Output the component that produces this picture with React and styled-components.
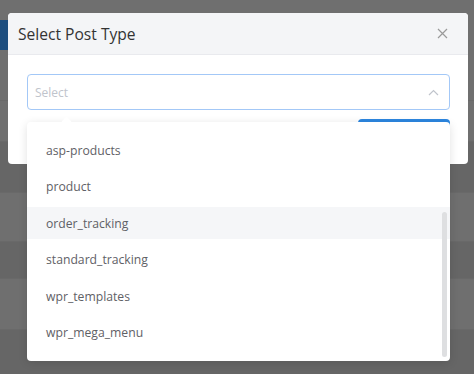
import React from "react";
import styled, { createGlobalStyle } from "styled-components";

const GlobalStyle = createGlobalStyle`
  html, body {
    margin: 0;
    padding: 0;
    width: 474px;
    height: 374px;
    overflow: hidden;
    font-family: "Open Sans", "Noto Sans", sans-serif;
  }
`;

const Page = styled.div`
  position: relative;
  width: 474px;
  height: 374px;
  background: #dedede;
  overflow: hidden;
`;

const PageBar = styled.div`
  height: 60px;
  display: flex;
  align-items: flex-start;
  padding-top: 20px;
  box-sizing: border-box;
  .tab {
    width: 60px;
    height: 30px;
    background: #3d9dfd;
  }
`;

const PageRow = styled.div`
  height: ${(p) => p.h}px;
  background: ${(p) => (p.alt ? "#cdcdcd" : "#dedede")};
  border-bottom: 1px solid #d2d2d2;
`;

const Overlay = styled.div`
  position: absolute;
  inset: 0;
  background: rgba(0, 0, 0, 0.5);
`;

const Modal = styled.div`
  position: absolute;
  left: 8px;
  top: 13px;
  width: 460px;
  height: 151px;
  background: #fff;
  border-radius: 4px;
  overflow: hidden;
  display: flex;
  flex-direction: column;
`;

const ModalHeader = styled.div`
  height: 42px;
  background: #f4f5f7;
  border-bottom: 1px solid #e9eaee;
  display: flex;
  align-items: center;
  justify-content: space-between;
  padding: 0 20px 0 10px;
  box-sizing: border-box;
  h3 {
    margin: 0;
    font-size: 15.6px;
    font-weight: 400;
    color: #333;
  }
`;

const CloseBtn = styled.button`
  border: 0;
  background: none;
  padding: 0;
  display: flex;
  color: #9a9a9a;
  cursor: pointer;
`;

const ModalBody = styled.div`
  padding: 19px 18px 0 19px;
  display: flex;
  flex-direction: column;
  gap: 9px;
`;

const SelectBox = styled.div`
  height: 36px;
  border: 1px solid #a3c8f7;
  border-radius: 4px;
  box-sizing: border-box;
  display: flex;
  align-items: center;
  justify-content: space-between;
  padding: 0 10px 0 7px;
  font-size: 12px;
  color: #c0c4cc;
`;

const ActionRow = styled.div`
  display: flex;
  justify-content: flex-end;
`;

const PrimaryBtn = styled.div`
  width: 92px;
  height: 32px;
  background: #2c86e0;
  border-radius: 4px;
`;

const Dropdown = styled.div`
  position: absolute;
  left: 27px;
  top: 122px;
  width: 423px;
  height: 239px;
  background: #fff;
  border-radius: 4px;
  box-shadow: 0 2px 10px rgba(0, 0, 0, 0.12);
  box-sizing: border-box;
  padding: 12px 0 0;
  &::before {
    content: "";
    position: absolute;
    left: 36px;
    top: -4px;
    width: 7px;
    height: 7px;
    background: #fff;
    transform: rotate(45deg);
  }
`;

const Option = styled.div`
  height: 32px;
  margin-bottom: 4.6px;
  display: flex;
  align-items: center;
  padding: 0 19px;
  font-size: 12.2px;
  color: #5f6166;
  background: ${(p) => (p.hover ? "#f5f6f8" : "transparent")};
`;

const ScrollThumb = styled.div`
  position: absolute;
  right: 3px;
  top: 90px;
  width: 5px;
  height: 145px;
  border-radius: 3px;
  background: #dedfe1;
`;

const options = [
  "asp-products",
  "product",
  "order_tracking",
  "standard_tracking",
  "wpr_templates",
  "wpr_mega_menu",
];

export default function App() {
  return (
    <>
      <GlobalStyle />
      <Page>
        <PageBar>
          <div className="tab" />
        </PageBar>
        <PageRow h={40} />
        <PageRow h={40} />
        <PageRow h={50} alt />
        <PageRow h={48} />
        <PageRow h={36} alt />
        <PageRow h={50} />
        <PageRow h={50} alt />
        <Overlay />
        <Modal>
          <ModalHeader>
            <h3>Select Post Type</h3>
            <CloseBtn aria-label="close">
              <svg width="11" height="11" viewBox="0 0 11 11">
                <path d="M1 1L10 10M10 1L1 10" stroke="currentColor" strokeWidth="1.2" />
              </svg>
            </CloseBtn>
          </ModalHeader>
          <ModalBody>
            <SelectBox>
              <span>Select</span>
              <svg width="11" height="7" viewBox="0 0 11 7">
                <path d="M1 6L5.5 1.5L10 6" fill="none" stroke="#c0c4cc" strokeWidth="1.2" />
              </svg>
            </SelectBox>
            <ActionRow>
              <PrimaryBtn />
            </ActionRow>
          </ModalBody>
        </Modal>
        <Dropdown>
          {options.map((o) => (
            <Option key={o} hover={o === "order_tracking"}>
              {o}
            </Option>
          ))}
          <ScrollThumb />
        </Dropdown>
      </Page>
    </>
  );
}
